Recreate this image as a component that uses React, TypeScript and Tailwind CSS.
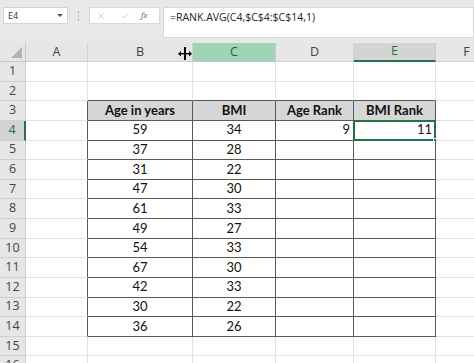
import { X, Check } from "lucide-react";

const ageData = [59, 37, 31, 47, 61, 49, 54, 67, 42, 30, 36];
const bmiData = [34, 28, 22, 30, 33, 27, 33, 30, 33, 22, 26];
const columns = ["A", "B", "C", "D", "E", "F"];
const rows = Array.from({ length: 16 }, (_, i) => i + 1);

const font = { fontFamily: '"Open Sans", "Noto Sans", sans-serif' };
const cellFont = { fontFamily: 'Lato, "Noto Sans", sans-serif' };

function ResizeCursor() {
  return (
    <svg width="14" height="13" viewBox="0 0 14 13" className="absolute left-[178px] top-[47px]">
      <rect x="6" y="0" width="2" height="13" fill="#000" />
      <rect x="1" y="6" width="12" height="1.4" fill="#000" />
      <path d="M0 6.7 L3 4 L3 9.4 Z" fill="#000" />
      <path d="M14 6.7 L11 4 L11 9.4 Z" fill="#000" />
    </svg>
  );
}

function cellValue(row: number, col: number) {
  if (row === 3) {
    return ["", "Age in years", "BMI", "Age Rank", "BMI Rank", ""][col];
  }
  if (row >= 4 && row <= 14) {
    if (col === 1) return String(ageData[row - 4]);
    if (col === 2) return String(bmiData[row - 4]);
    if (row === 4 && col === 3) return "9";
    if (row === 4 && col === 4) return "11";
  }
  return "";
}

export default function App() {
  return (
    <div className="relative h-[363px] w-[474px] overflow-hidden bg-white" style={font}>
      {/* toolbar */}
      <div className="flex h-[43px] items-start bg-[#e8e8e8] pt-[7px]">
        <div className="ml-[3px] flex h-[17px] w-[65px] items-center justify-between border border-[#d4d4d4] bg-white pl-[4px] pr-[4px]">
          <span className="text-[9px] text-[#333]">E4</span>
          <span className="h-0 w-0 border-x-[3px] border-t-[3px] border-x-transparent border-t-[#555]" />
        </div>
        <div className="ml-[10px] mt-[4px] flex flex-col gap-[2px]">
          <span className="h-[2px] w-[1px] bg-[#b0b0b0]" />
          <span className="h-[2px] w-[1px] bg-[#b0b0b0]" />
          <span className="h-[2px] w-[1px] bg-[#b0b0b0]" />
        </div>
        <div className="ml-[10px] flex h-[17px] w-[71px] items-center border border-[#d8d8d8] bg-white">
          <X className="ml-[6px] h-[10px] w-[10px] text-[#b5b5b5]" strokeWidth={1.5} />
          <Check className="ml-[14px] h-[10px] w-[10px] text-[#b5b5b5]" strokeWidth={1.5} />
          <span className="ml-[11px] font-serif text-[9px] italic text-[#777]">fx</span>
        </div>
        <div className="ml-[3px] h-[31px] flex-1 border border-[#d8d8d8] bg-white pl-[6px] leading-[15px]">
          <span className="text-[10.5px] text-[#222]">=RANK.AVG(C4,$C$4:$C$14,1)</span>
        </div>
      </div>

      {/* sheet grid */}
      <div className="grid grid-cols-[26px_62px_105px_83px_78px_82px_62px] grid-rows-[19px_repeat(16,19.64px)]">
        <div className="relative border-b border-r border-[#c8c8c8] bg-[#e6e6e6]">
          <div className="absolute bottom-[3px] right-[3px] h-0 w-0 border-b-[11px] border-l-[11px] border-b-[#b4b4b4] border-l-transparent" />
        </div>
        {columns.map((c) => {
          const cls =
            c === "C"
              ? "bg-[#9fd5b7] text-[#1f5e3a] border-r border-b border-[#c8c8c8]"
              : c === "E"
              ? "bg-[#d4d4d4] text-[#217346] border-r border-[#c8c8c8] border-b-2 border-b-[#217346]"
              : "bg-[#e6e6e6] text-[#444] border-r border-b border-[#d0d0d0]";
          return (
            <div key={c} className={`flex items-center justify-center text-[12.5px] ${cls}`}>
              {c}
            </div>
          );
        })}

        {rows.map((r) => (
          <Row key={r} r={r} />
        ))}
      </div>
      <ResizeCursor />
    </div>
  );
}

function Row({ r }: { r: number }) {
  const inTable = r >= 3 && r <= 14;
  return (
    <>
      <div
        className={
          r === 4
            ? "flex items-center justify-center border-b border-r-2 border-[#d0d0d0] border-r-[#217346] bg-[#d4d4d4] text-[12.5px] text-[#217346]"
            : "flex items-center justify-center border-b border-r border-[#d0d0d0] bg-[#e6e6e6] text-[12.5px] text-[#444]"
        }
      >
        {r}
      </div>
      {columns.map((_, ci) => {
        const col = ci;
        const inCols = col >= 1 && col <= 4;
        const darkRight = inTable && col <= 4;
        const darkBottom = inCols && r >= 2 && r <= 14;
        const right = darkRight ? "border-r-[#595959]" : "border-r-[#e1e1e1]";
        const bottom = darkBottom ? "border-b-[#595959]" : "border-b-[#e1e1e1]";
        const head = r === 3 && inCols ? "bg-[#d6d6d6] font-bold" : "bg-white";
        const align = r === 4 && (col === 3 || col === 4) ? "justify-end pr-[3px]" : "justify-center";
        const selected = r === 4 && col === 4;
        return (
          <div
            key={col}
            className={`relative flex items-center border-b border-r text-[13px] text-[#111] ${right} ${bottom} ${head} ${align}`}
            style={cellFont}
          >
            {cellValue(r, col)}
            {selected && (
              <>
                <div className="pointer-events-none absolute -left-[1px] -top-[1px] bottom-[-1px] right-[-1px] border-2 border-[#217346]" />
                <div className="absolute bottom-[-3px] right-[-3px] h-[5px] w-[5px] border border-white bg-[#217346]" />
              </>
            )}
          </div>
        );
      })}
    </>
  );
}
